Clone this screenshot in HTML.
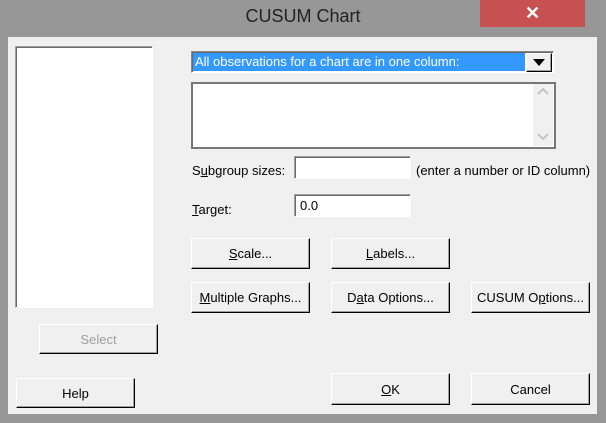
<!DOCTYPE html>
<html><head><style>
*{margin:0;padding:0;box-sizing:border-box}
body{width:606px;height:423px;background:#979797;position:relative;overflow:hidden;font-family:"Liberation Sans",sans-serif;font-size:13px;color:#000}
.a{position:absolute}
#title{left:0;width:606px;top:6px;text-align:center;font-size:18px;color:#222}
#close{left:480px;top:0;width:105px;height:27px;background:#c75050;color:#fff;font-size:18px;text-align:center;line-height:27px;font-weight:bold}
#client{left:8px;top:37px;width:589px;height:377px;background:#f0f0f0}
.sunk{background:#fff;border:1px solid;border-color:#a0a0a0 #fff #fff #a0a0a0;box-shadow:inset 1px 1px 0 #696969}
.btn{background:#f0f0f0;border:1px solid;border-color:#fff #000 #000 #fff;box-shadow:inset -1px -1px 0 #a0a0a0;text-align:center;display:flex;align-items:center;justify-content:center}
u{text-decoration:underline}
</style></head><body>
<div class="a" id="title">CUSUM Chart</div>
<div class="a" id="close">✕</div>
<div class="a" id="client"></div>
<div class="a sunk" style="left:15px;top:46px;width:138px;height:262px"></div>
<div class="a sunk" style="left:191px;top:51px;width:363px;height:22px;border-color:#888 #fff #fff #888"></div>
<div class="a" style="left:193px;top:53px;width:332px;height:18px;background:#3399ff;color:#fff;padding-left:2px;line-height:18px">All observations for a chart are in one column:</div>
<div class="a btn" style="left:526px;top:53px;width:26px;height:19px"><svg width="12" height="7"><path d="M0 0H12L6 7Z" fill="#000"/></svg></div>
<div class="a sunk" style="left:191px;top:82px;width:365px;height:67px;border:2px solid #777;box-shadow:none"></div>
<div class="a" style="left:533px;top:84px;width:20px;height:62px;background:#f0f0f0"><svg width="20" height="62"><path d="M5 10L10 5L15 10M5 50L10 55L15 50" stroke="#c4c4c4" stroke-width="2" fill="none"/></svg></div>
<div class="a" style="left:192px;top:163px">S<u>u</u>bgroup sizes:</div>
<div class="a sunk" style="left:294px;top:156px;width:117px;height:23px"></div>
<div class="a" style="left:416px;top:163px">(enter a number or ID column)</div>
<div class="a" style="left:192px;top:202px"><u>T</u>arget:</div>
<div class="a sunk" style="left:294px;top:194px;width:117px;height:23px;padding:3px 0 0 5px">0.0</div>
<div class="a btn" style="left:191px;top:238px;width:119px;height:31px"><span><u>S</u>cale...</span></div>
<div class="a btn" style="left:331px;top:238px;width:119px;height:31px"><span><u>L</u>abels...</span></div>
<div class="a btn" style="left:191px;top:282px;width:119px;height:31px"><span><u>M</u>ultiple Graphs...</span></div>
<div class="a btn" style="left:331px;top:282px;width:119px;height:31px"><span>D<u>a</u>ta Options...</span></div>
<div class="a btn" style="left:471px;top:282px;width:119px;height:31px"><span>CUSUM O<u>p</u>tions...</span></div>
<div class="a btn" style="left:331px;top:373px;width:119px;height:32px"><span><u>O</u>K</span></div>
<div class="a btn" style="left:471px;top:373px;width:119px;height:32px">Cancel</div>
<div class="a btn" style="left:39px;top:324px;width:119px;height:30px;color:#a0a0a0">Select</div>
<div class="a btn" style="left:16px;top:378px;width:119px;height:30px">Help</div>
</body></html>
